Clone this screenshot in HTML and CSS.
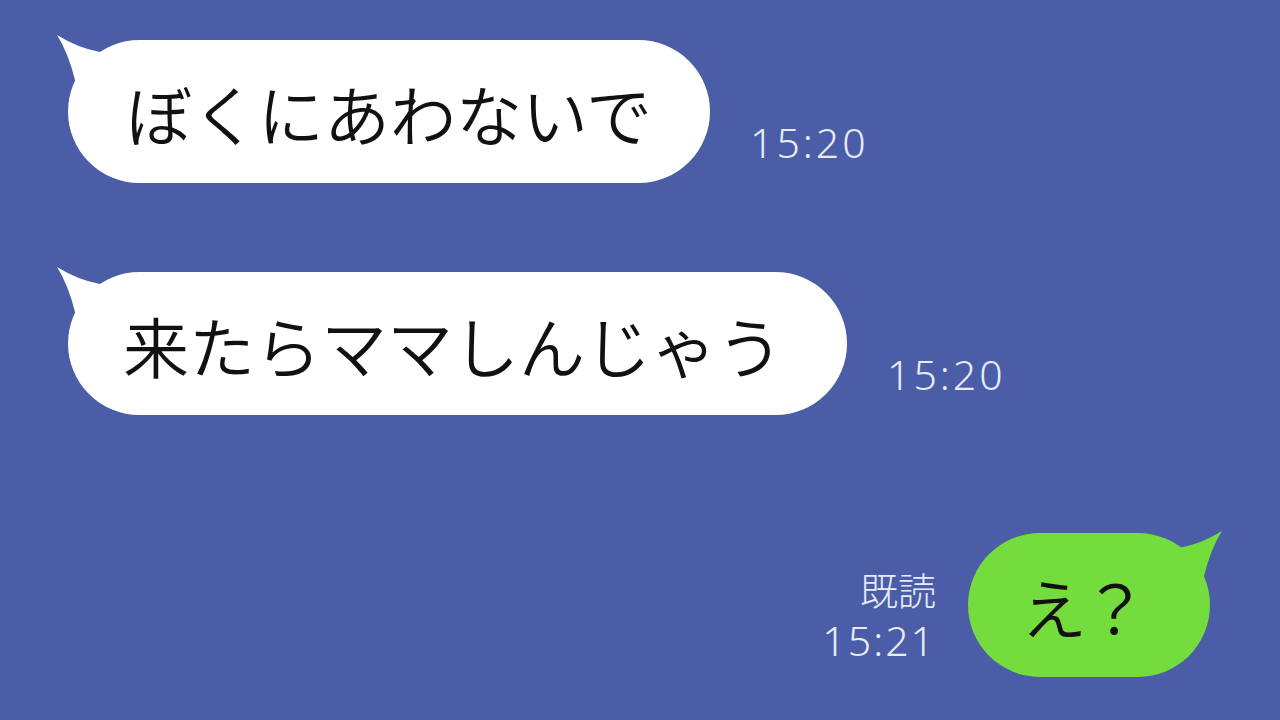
FILE: index.html
```html
<!DOCTYPE html>
<html lang="ja">
<head>
    <meta charset="UTF-8">
    <meta name="viewport" content="width=device-width, initial-scale=1.0">
    <title>トーク</title>
    <link rel="stylesheet" href="styles.css">
</head>
<body>
    <div class="chat">
        <div class="row row-in first">
            <div class="bubble bubble-in">
                <svg class="tail tail-in" viewBox="0 0 60 60" aria-hidden="true">
                    <path d="M1 1 Q12 18 19 46 L50 46 L44 18 Q22 14 1 1 Z" />
                </svg>
                <span class="text">ぼくにあわないで</span>
            </div>
            <div class="meta">
                <span class="time">15:20</span>
            </div>
        </div>

        <div class="row row-in second">
            <div class="bubble bubble-in bubble-wide">
                <svg class="tail tail-in" viewBox="0 0 60 60" aria-hidden="true">
                    <path d="M1 1 Q12 18 19 46 L50 46 L44 18 Q22 14 1 1 Z" />
                </svg>
                <span class="text">来たらママしんじゃう</span>
            </div>
            <div class="meta">
                <span class="time">15:20</span>
            </div>
        </div>

        <div class="row row-out">
            <div class="meta meta-out">
                <span class="read">既読</span>
                <span class="time">15:21</span>
            </div>
            <div class="bubble bubble-out">
                <svg class="tail tail-out" viewBox="0 0 60 60" aria-hidden="true">
                    <path d="M1 1 Q12 18 19 46 L50 46 L44 18 Q22 14 1 1 Z" />
                </svg>
                <span class="text text-out">え？</span>
            </div>
        </div>
    </div>
</body>
</html>
```

FILE: styles.css
```css
body {
    margin: 0;
    width: 1280px;
    height: 720px;
    overflow: hidden;
    background: #4a5da6;
    font-family: "Noto Sans CJK JP", "Noto Sans", sans-serif;
}

.chat {
    display: flex;
    flex-direction: column;
    padding-top: 40px;
}

.row {
    display: flex;
    align-items: flex-end;
}

.row-in {
    padding-left: 68px;
}

.first {
    margin-bottom: 89px;
}

.second {
    margin-bottom: 118px;
}

.row-out {
    justify-content: flex-end;
    padding-right: 70px;
}

.bubble {
    position: relative;
    display: flex;
    align-items: center;
    height: 143px;
    border-radius: 72px;
    box-sizing: border-box;
}

.bubble-in {
    background: #fff;
    padding: 0 58px;
}

.bubble-wide {
    padding: 0 64px 0 55px;
}

.bubble-out {
    background: #75dc3d;
    padding: 0 67px 0 53px;
    height: 144px;
}

.text {
    font-size: 66px;
    font-weight: 350;
    color: #111;
    line-height: 1;
    white-space: nowrap;
    position: relative;
}

.text-out {
    letter-spacing: -5px;
}

.tail {
    position: absolute;
    top: -6px;
    width: 60px;
    height: 60px;
}

.tail path {
    fill: currentColor;
}

.tail-in {
    left: -12px;
    color: #fff;
}

.tail-out {
    right: -13px;
    top: -3px;
    color: #75dc3d;
    transform: scaleX(-1);
}

.meta {
    display: flex;
    flex-direction: column;
    margin-left: 40px;
    margin-bottom: 20px;
    color: #e6ecf7;
}

.meta-out {
    align-items: flex-end;
    margin-left: 0;
    margin-right: 32px;
    margin-bottom: 16px;
}

.time {
    font-family: "Noto Sans", sans-serif;
    font-size: 41px;
    font-weight: 300;
    letter-spacing: 3px;
    line-height: 1;
}

.meta-out .time {
    letter-spacing: 2px;
}

.read {
    font-size: 38px;
    font-weight: 300;
    line-height: 1;
    margin-bottom: 12px;
}
```
